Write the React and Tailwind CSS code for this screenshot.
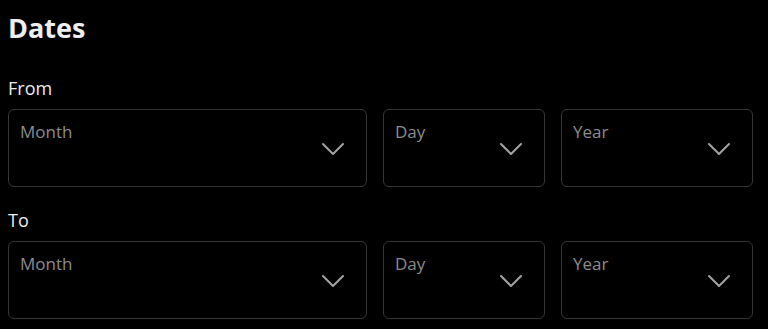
import React from 'react';

const Chevron = () => (
  <svg width="24" height="14" viewBox="0 0 24 14" fill="none" className="shrink-0">
    <path d="M2 2 L12 12 L22 2" stroke="#a3a3a3" strokeWidth="2" strokeLinecap="round" strokeLinejoin="round" />
  </svg>
);

const SelectBox = ({ label, width }) => (
  <div className={`${width} h-[78px] rounded-[6px] border border-[#363636] bg-black pl-[11px] pr-[21px] pt-[10px] flex justify-between`}>
    <span className="text-[17px] leading-[24px] text-[#8c8c8c]">{label}</span>
    <div className="pt-[22px]">
      <Chevron />
    </div>
  </div>
);

const DateRow = ({ title }) => (
  <div>
    <p className="text-[18px] leading-[24px] text-[#ececec] mb-[9px]">{title}</p>
    <div className="flex gap-[16px]">
      <SelectBox label="Month" width="w-[359px]" />
      <SelectBox label="Day" width="w-[162px]" />
      <SelectBox label="Year" width="w-[192px]" />
    </div>
  </div>
);

export default function App() {
  return (
    <div className="w-[768px] h-[329px] bg-black px-[8px] pt-[11px] font-['Open_Sans',sans-serif] overflow-hidden">
      <h1 className="text-[27px] leading-[34px] font-bold text-[#eeeeee] mb-[33px]">Dates</h1>
      <div className="flex flex-col gap-[21px] -mt-[2px]">
        <DateRow title="From" />
        <DateRow title="To" />
      </div>
    </div>
  );
}
